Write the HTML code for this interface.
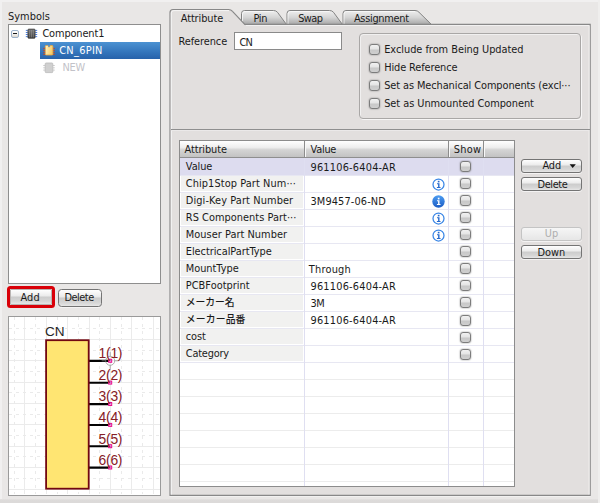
<!DOCTYPE html>
<html lang="en">
<head>
<meta charset="utf-8">
<title>Symbols</title>
<style>
html,body{margin:0;padding:0;}
body{width:600px;height:503px;overflow:hidden;position:relative;background:#e9e7e6;
 font-family:'DejaVu Sans','Liberation Sans','Noto Sans CJK JP',sans-serif;font-size:9.8px;color:#1a1a1a;}
.a{position:absolute;}
.box{position:absolute;background:#fff;border:1px solid #8e8e8e;box-sizing:border-box;}
.btn{position:absolute;box-sizing:border-box;border:1px solid #747474;border-radius:3px;
 background:linear-gradient(#fefefe 0%,#ececec 40%,#cdcdcd 52%,#d6d6d6 80%,#e6e6e6 100%);box-shadow:0 1px 0 #f4f3f3;}
.btn.dis{border-color:#c4c4c4;background:linear-gradient(#f6f6f6,#e6e6e6);}
.cb{position:absolute;width:11px;height:11px;box-sizing:border-box;border:1px solid #7c7c7c;border-radius:3px;
 background:linear-gradient(#f1f1f1 0%,#e4e4e4 46%,#c8c8c8 54%,#cfcfcf 100%);box-shadow:0 0 1.5px 0 #6e6e6e;}
.hl{position:absolute;left:180px;width:334px;height:1px;}
#tx{position:absolute;left:0;top:0;}
#tx text{font-family:'DejaVu Sans','Liberation Sans','Noto Sans CJK JP',sans-serif;font-size:9.8px;}
</style>
</head>
<body>
<!-- window edges -->
<div class="a" style="left:0;top:0;width:600px;height:2px;background:#f1f0f0"></div>
<div class="a" style="left:0;top:0;width:2px;height:503px;background:#f1f0f0"></div>
<div class="a" style="left:0;top:499px;width:600px;height:4px;background:linear-gradient(#e4e2e1,#dcdad9 40%)"></div>

<!-- LEFT PANEL -->
<div class="box" style="left:8px;top:24px;width:153px;height:260px;"></div>
<div class="a" style="left:40px;top:42px;width:120px;height:17px;background:linear-gradient(#4c92d2,#3577bd 55%,#2762aa);"></div>
<!-- expander -->
<div class="a" style="left:11px;top:29.5px;width:8px;height:8px;box-sizing:border-box;border:1px solid #9db2ca;border-radius:2px;background:linear-gradient(#ffffff,#f4f2ee 50%,#dcd8d0);"></div>
<div class="a" style="left:13px;top:33px;width:4px;height:1.3px;background:#1a1a1a;"></div>
<!-- icons -->
<svg class="a" style="left:25px;top:28px" width="13" height="12" viewBox="0 0 13 12">
 <defs><linearGradient id="cg" x1="0" y1="0" x2="0" y2="1"><stop offset="0" stop-color="#7a7a7a"/><stop offset="1" stop-color="#3c3c3c"/></linearGradient></defs>
 <g fill="#4a7ee0"><rect x="0.8" y="1.9" width="2" height="1"/><rect x="0.8" y="4" width="2" height="1"/><rect x="0.8" y="6" width="2" height="1"/><rect x="0.8" y="8.1" width="2" height="1"/>
 <rect x="10.2" y="1.9" width="2" height="1"/><rect x="10.2" y="4" width="2" height="1"/><rect x="10.2" y="6" width="2" height="1"/><rect x="10.2" y="8.1" width="2" height="1"/></g>
 <rect x="2.9" y="1.1" width="7.2" height="9.2" rx="0.9" fill="url(#cg)" stroke="#3a3a3a" stroke-width="0.7"/>
 <path d="M4.700 2v7.400M6.500 2v7.400M8.300 2v7.400" stroke="#9a9a9a" stroke-width="0.7" opacity="0.8"/>
</svg>
<svg class="a" style="left:42px;top:45px" width="14" height="11" viewBox="0 0 14 11">
 <defs><linearGradient id="yg" x1="0" y1="0" x2="1" y2="0.3"><stop offset="0" stop-color="#fff4c4"/><stop offset="1" stop-color="#f6cc68"/></linearGradient></defs>
 <g fill="#b8482e"><rect x="1.200" y="2.900" width="2" height="1"/><rect x="1.200" y="4.900" width="2" height="1"/><rect x="1.200" y="6.900" width="2" height="1"/><rect x="1.200" y="8.900" width="2" height="1"/>
 <rect x="10.800" y="2.900" width="2" height="1"/><rect x="10.800" y="4.900" width="2" height="1"/><rect x="10.800" y="6.900" width="2" height="1"/><rect x="10.800" y="8.900" width="2" height="1"/></g>
 <rect x="3.300" y="0.500" width="7.600" height="9.500" rx="0.800" fill="url(#yg)" stroke="#e6a540" stroke-width="0.800"/>
 <path d="M6 0.200h2.100v1.700h-2.100z" fill="#4c8fd0"/><path d="M6 1.900h2.100" stroke="#e6a540" stroke-width="0.600"/>
</svg>
<svg class="a" style="left:42px;top:62px" width="14" height="12" viewBox="0 0 14 12">
 <g fill="#cfcfcf"><rect x="1.200" y="3" width="2" height="1"/><rect x="1.200" y="5.300" width="2" height="1"/><rect x="1.200" y="7.600" width="2" height="1"/>
 <rect x="10.800" y="3" width="2" height="1"/><rect x="10.800" y="5.300" width="2" height="1"/><rect x="10.800" y="7.600" width="2" height="1"/></g>
 <rect x="3.200" y="1" width="7.600" height="9.600" rx="0.900" fill="#d0d0d0" stroke="#b9b9b9" stroke-width="0.800"/>
</svg>

<!-- Add / Delete -->
<div class="a" style="left:7px;top:286px;width:48px;height:22px;box-sizing:border-box;border:3px solid #d90008;border-radius:3.5px;"></div>
<div class="btn" style="left:10px;top:289px;width:42px;height:16px;border-radius:1px;border-color:#b9b4b2;box-shadow:none;"></div>
<div class="btn" style="left:58px;top:289px;width:44px;height:18px;border-radius:3.5px;"></div>

<!-- preview -->
<div class="box" style="left:8px;top:316px;width:153px;height:180px;border-color:#9a9a9a;"></div>
<svg class="a" style="left:9px;top:317px" width="151" height="177" viewBox="9 317 151 177">
 <g stroke="#ebebeb" stroke-width="1">
  <path d="M24.500 317v177M46.500 317v177M67.500 317v177M89.500 317v177M110.500 317v177M131.500 317v177M153.500 317v177"/>
  <path d="M9 339.500h151M9 360.500h151M9 382.500h151M9 403.500h151M9 424.500h151M9 446.500h151M9 467.500h151M9 489.500h151"/>
 </g>
 <g stroke="#eaeaea" stroke-width="1" stroke-dasharray="3 4">
  <path d="M14.500 317v177M35.500 317v177M57.500 317v177M78.500 317v177M99.500 317v177M121.500 317v177M142.500 317v177"/>
  <path d="M9 328.500h151M9 350.500h151M9 371.500h151M9 392.500h151M9 414.500h151M9 435.500h151M9 456.500h151M9 478.500h151"/>
 </g>
 <g stroke="#030303" stroke-width="2.100">
  <path d="M89 360.9h21M89 382.7h21M89 404.1h21M89 425.0h21M89 446.3h21M89 467.6h21"/>
 </g>
 <rect x="46.100" y="340.200" width="42.600" height="148.500" fill="#ffe572" stroke="#720810" stroke-width="1.800"/>
 <g fill="none" stroke="#8c8c8c" stroke-width="0.700"><circle cx="110.200" cy="360.800" r="4.500"/><path d="M110.200 352.100v4.200M110.200 365.300v3.600M114.700 360.800h4M101.700 360.800h4" /></g>
 <g fill="#ff9ad6" stroke="#e6108e" stroke-width="1">
  <rect x="108.700" y="359.3" width="3" height="3"/><rect x="108.700" y="381.1" width="3" height="3"/><rect x="108.700" y="402.5" width="3" height="3"/><rect x="108.700" y="423.4" width="3" height="3"/><rect x="108.700" y="444.7" width="3" height="3"/><rect x="108.700" y="466.0" width="3" height="3"/>
 </g>
 <g font-family="'Liberation Sans',sans-serif" font-size="13.900" fill="#862026">
  <text x="98.500" y="358.1" textLength="24">1(1)</text><text x="98.500" y="379.9" textLength="24">2(2)</text><text x="98.500" y="401.3" textLength="24">3(3)</text><text x="98.500" y="422.2" textLength="24">4(4)</text><text x="98.500" y="443.5" textLength="24">5(5)</text><text x="98.500" y="464.8" textLength="24">6(6)</text>
 </g>
 <text x="44.900" y="336" font-family="'Liberation Sans',sans-serif" font-size="13.600" fill="#262626">CN</text>
</svg>

<!-- RIGHT: TAB PANEL -->
<div class="a" style="left:598px;top:0;width:2px;height:503px;background:#efeeed"></div>
<svg class="a" style="left:160px;top:0px" width="440" height="503" viewBox="160 0 440 503">
 <defs>
  <linearGradient id="tg" x1="0" y1="0" x2="0" y2="1"><stop offset="0" stop-color="#f0f0f0"/><stop offset="0.5" stop-color="#d4d4d4"/><stop offset="1" stop-color="#a6a6a6"/></linearGradient>
 </defs>
 <path d="M343 24.5V13.5Q343 10.5 346 10.5H415.0Q417.5 10.5 419.0 12.3L431.5 24.5z" fill="url(#tg)" stroke="#828282" stroke-width="1"/>
 <path d="M344 24V14Q344 11.500 346.5 11.500H415.0" fill="none" stroke="#fafafa" stroke-width="1" opacity="0.8"/>
 <path d="M287 24.5V13.5Q287 10.5 290 10.5H329.5Q332 10.5 333.5 12.3L342.5 24.5z" fill="url(#tg)" stroke="#828282" stroke-width="1"/>
 <path d="M288 24V14Q288 11.500 290.5 11.500H329.5" fill="none" stroke="#fafafa" stroke-width="1" opacity="0.8"/>
 <path d="M241.5 24.5V13.5Q241.5 10.5 244.5 10.5H273.5Q276 10.5 277.5 12.3L286.5 24.5z" fill="url(#tg)" stroke="#828282" stroke-width="1"/>
 <path d="M242.5 24V14Q242.5 11.500 245.0 11.500H273.5" fill="none" stroke="#fafafa" stroke-width="1" opacity="0.8"/>
 <path d="M170 495.300V12.5Q170 9.500 173 9.500H228.5Q231 9.500 232.500 11.300L244.800 24.400H590.200V495.300z" fill="#e2dfde" stroke="#888888" stroke-width="1.150"/>
 <path d="M171.300 494.500V13Q171.300 10.600 174 10.600H229" fill="none" stroke="#f6f5f5" stroke-width="1"/>
 <path d="M246 25.500H589M589.100 25.500V494.500" fill="none" stroke="#f2f1f1" stroke-width="1"/>
 <path d="M169.500 496.500H590.500" fill="none" stroke="#f2f1f0" stroke-width="1"/>
</svg>

<div class="box" style="left:234px;top:32px;width:108px;height:18px;border-color:#8a8a8a;"></div>

<!-- options group -->
<div class="a" style="left:359px;top:33px;width:222px;height:86px;box-sizing:border-box;border:1px solid #a9a7a6;border-radius:4px;box-shadow:1px 1px 0 #f7f6f6, inset 1px 1px 0 #f1f0f0;"></div>
<div class="cb" style="left:369px;top:44px;"></div>
<div class="cb" style="left:369px;top:62px;"></div>
<div class="cb" style="left:369px;top:80px;"></div>
<div class="cb" style="left:369px;top:98px;"></div>

<!-- separator -->
<div class="a" style="left:171px;top:129px;width:419px;height:1px;background:#8f8f8f"></div>
<div class="a" style="left:171px;top:130px;width:418px;height:1px;background:#ebe9e9"></div>

<!-- TABLE -->
<div class="box" style="left:179px;top:140px;width:336px;height:347px;border-color:#8c8c8c;"></div>
<div class="a" style="left:180px;top:141px;width:334px;height:17px;background:linear-gradient(#ffffff,#eeeeee 40%,#d4d4d4 55%,#c2c2c2);border-bottom:1px solid #8e8e8e;box-sizing:border-box;"></div>
<div class="a" style="left:180px;top:158px;width:334px;height:17px;background:#dddcef;"></div>
<div class="a" style="left:181px;top:176px;width:122px;height:15px;background:#f1f1f0;"></div>
<div class="a" style="left:181px;top:193px;width:122px;height:15px;background:#f1f1f0;"></div>
<div class="a" style="left:181px;top:210px;width:122px;height:15px;background:#f1f1f0;"></div>
<div class="a" style="left:181px;top:227px;width:122px;height:15px;background:#f1f1f0;"></div>
<div class="a" style="left:181px;top:244px;width:122px;height:15px;background:#f1f1f0;"></div>
<div class="a" style="left:181px;top:261px;width:122px;height:15px;background:#f1f1f0;"></div>
<div class="a" style="left:181px;top:278px;width:122px;height:15px;background:#f1f1f0;"></div>
<div class="a" style="left:181px;top:295px;width:122px;height:15px;background:#f1f1f0;"></div>
<div class="a" style="left:181px;top:312px;width:122px;height:15px;background:#f1f1f0;"></div>
<div class="a" style="left:181px;top:329px;width:122px;height:15px;background:#f1f1f0;"></div>
<div class="a" style="left:181px;top:346px;width:122px;height:15px;background:#f1f1f0;"></div>
<div class="hl" style="top:175px;background:#e7e7f2"></div>
<div class="hl" style="top:192px;background:#e7e7f2"></div>
<div class="hl" style="top:209px;background:#e7e7f2"></div>
<div class="hl" style="top:226px;background:#e7e7f2"></div>
<div class="hl" style="top:243px;background:#e7e7f2"></div>
<div class="hl" style="top:260px;background:#e7e7f2"></div>
<div class="hl" style="top:277px;background:#e7e7f2"></div>
<div class="hl" style="top:294px;background:#e7e7f2"></div>
<div class="hl" style="top:311px;background:#e7e7f2"></div>
<div class="hl" style="top:328px;background:#e7e7f2"></div>
<div class="hl" style="top:345px;background:#e7e7f2"></div>
<div class="hl" style="top:362px;background:#e7e7f2"></div>
<div class="hl" style="top:379px;background:#ececec"></div>
<div class="hl" style="top:396px;background:#ececec"></div>
<div class="hl" style="top:413px;background:#ececec"></div>
<div class="hl" style="top:430px;background:#ececec"></div>
<div class="hl" style="top:447px;background:#ececec"></div>
<div class="hl" style="top:464px;background:#ececec"></div>
<div class="hl" style="top:481px;background:#ececec"></div>
<!-- column lines -->
<div class="a" style="left:304px;top:158px;width:1px;height:328px;background:#dfdff1"></div>
<div class="a" style="left:448px;top:158px;width:1px;height:328px;background:#dfdff1"></div>
<div class="a" style="left:483px;top:158px;width:1px;height:328px;background:#dfdff1"></div>
<div class="a" style="left:304px;top:141px;width:1px;height:17px;background:#8c8c8c"></div>
<div class="a" style="left:305px;top:141px;width:1px;height:16px;background:#f8f8f8"></div>
<div class="a" style="left:448px;top:141px;width:1px;height:17px;background:#8c8c8c"></div>
<div class="a" style="left:449px;top:141px;width:1px;height:16px;background:#f8f8f8"></div>
<div class="a" style="left:483px;top:141px;width:1px;height:17px;background:#8c8c8c"></div>
<div class="a" style="left:484px;top:141px;width:1px;height:16px;background:#f8f8f8"></div>

<div class="cb" style="left:460px;top:161px;"></div>
<div class="cb" style="left:460px;top:178px;"></div>
<div class="cb" style="left:460px;top:195px;"></div>
<div class="cb" style="left:460px;top:212px;"></div>
<div class="cb" style="left:460px;top:229px;"></div>
<div class="cb" style="left:460px;top:246px;"></div>
<div class="cb" style="left:460px;top:263px;"></div>
<div class="cb" style="left:460px;top:280px;"></div>
<div class="cb" style="left:460px;top:297px;"></div>
<div class="cb" style="left:460px;top:315px;"></div>
<div class="cb" style="left:460px;top:332px;"></div>
<div class="cb" style="left:460px;top:349px;"></div>
<svg class="a" style="left:432px;top:178px" width="13" height="13" viewBox="0 0 13 13"><circle cx="6.5" cy="6.5" r="5.5" fill="#fff" stroke="#3a86e6" stroke-width="1.25"/><path d="M5 5.2h2.500v3.700h1v1h-3.600v-1h1.200v-2.700h-1.100z" fill="#2468cc"/><rect x="5.800" y="2.800" width="1.700" height="1.600" fill="#2468cc"/></svg>
<svg class="a" style="left:432px;top:195px" width="13" height="13" viewBox="0 0 13 13"><defs><linearGradient id="ig" x1="0" y1="0" x2="0" y2="1"><stop offset="0" stop-color="#4c9cf2"/><stop offset="1" stop-color="#1c5cc4"/></linearGradient></defs><circle cx="6.5" cy="6.5" r="6.2" fill="url(#ig)"/><path d="M5 5.200h2.500v3.700h1v1h-3.600v-1h1.200v-2.700h-1.100z" fill="#fff"/><rect x="5.800" y="2.700" width="1.700" height="1.700" fill="#fff"/></svg>
<svg class="a" style="left:432px;top:212px" width="13" height="13" viewBox="0 0 13 13"><circle cx="6.5" cy="6.5" r="5.5" fill="#fff" stroke="#3a86e6" stroke-width="1.25"/><path d="M5 5.2h2.500v3.700h1v1h-3.600v-1h1.200v-2.700h-1.100z" fill="#2468cc"/><rect x="5.800" y="2.800" width="1.700" height="1.600" fill="#2468cc"/></svg>
<svg class="a" style="left:432px;top:229px" width="13" height="13" viewBox="0 0 13 13"><circle cx="6.5" cy="6.5" r="5.5" fill="#fff" stroke="#3a86e6" stroke-width="1.25"/><path d="M5 5.2h2.500v3.700h1v1h-3.600v-1h1.200v-2.700h-1.100z" fill="#2468cc"/><rect x="5.800" y="2.800" width="1.700" height="1.600" fill="#2468cc"/></svg>

<!-- right buttons -->
<div class="btn" style="left:521px;top:159px;width:61px;height:14px;"></div>
<svg class="a" style="left:568px;top:163px" width="10" height="6" viewBox="0 0 10 6"><path d="M1.600 1.200h6.200l-3.100 3.800z" fill="#111"/></svg>
<div class="btn" style="left:521px;top:177px;width:61px;height:14px;"></div>
<div class="btn dis" style="left:521px;top:227px;width:61px;height:14px;"></div>
<div class="btn" style="left:521px;top:245px;width:61px;height:14px;"></div>

<!-- all UI labels -->
<svg id="tx" width="600" height="503" viewBox="0 0 600 503">
<text x="7.9" y="19.6" fill="#1a1a1a" textLength="42.0">Symbols</text>
<text x="42.4" y="36.7" fill="#1a1a1a" textLength="62.0">Component1</text>
<text x="59.2" y="53.5" fill="#ffffff" textLength="43.2">CN_6PIN</text>
<text x="62.4" y="71.0" fill="#c2c2c8" textLength="22.8">NEW</text>
<text x="20.5" y="300.5" fill="#1a1a1a" textLength="19.1">Add</text>
<text x="64.4" y="300.5" fill="#1a1a1a" textLength="29.8">Delete</text>
<text x="180.7" y="21.5" fill="#1a1a1a" textLength="42.5">Attribute</text>
<text x="253.4" y="22.0" fill="#1a1a1a" textLength="14.0">Pin</text>
<text x="298.2" y="22.0" fill="#1a1a1a" textLength="24.7">Swap</text>
<text x="353.9" y="22.0" fill="#1a1a1a" textLength="55.2">Assignment</text>
<text x="178.5" y="44.8" fill="#1a1a1a" textLength="48.7">Reference</text>
<text x="239.5" y="45.5" fill="#1a1a1a" textLength="13.4">CN</text>
<text x="384.2" y="52.9" fill="#1a1a1a" textLength="139.3">Exclude from Being Updated</text>
<text x="384.2" y="70.8" fill="#1a1a1a" textLength="73.3">Hide Reference</text>
<text x="384.2" y="88.8" fill="#1a1a1a" textLength="186.3">Set as Mechanical Components (excl···</text>
<text x="384.2" y="106.7" fill="#1a1a1a" textLength="149.7">Set as Unmounted Component</text>
<text x="184.5" y="153.4" fill="#1a1a1a" textLength="42.5">Attribute</text>
<text x="310.5" y="153.3" fill="#1a1a1a" textLength="25.9">Value</text>
<text x="453.7" y="153.4" fill="#1a1a1a" textLength="27.3">Show</text>
<text x="542.4" y="169.1" fill="#1a1a1a" textLength="18.8">Add</text>
<text x="537.6" y="187.5" fill="#1a1a1a" textLength="30.1">Delete</text>
<text x="544.7" y="237.1" fill="#aeaeae" textLength="13.4">Up</text>
<text x="537.6" y="255.5" fill="#1a1a1a" textLength="27.7">Down</text>
<text x="185.8" y="169.5" fill="#1a1a1a" textLength="26.5">Value</text>
<text x="185.8" y="186.5" fill="#1a1a1a" textLength="110.1">Chip1Stop Part Num···</text>
<text x="185.8" y="203.5" fill="#1a1a1a" textLength="107.3">Digi-Key Part Number</text>
<text x="185.8" y="220.5" fill="#1a1a1a" textLength="110.5">RS Components Part···</text>
<text x="185.8" y="237.5" fill="#1a1a1a" textLength="101.2">Mouser Part Number</text>
<text x="185.8" y="254.5" fill="#1a1a1a" textLength="86.0">ElectricalPartType</text>
<text x="185.8" y="271.5" fill="#1a1a1a" textLength="53.0">MountType</text>
<text x="185.8" y="288.5" fill="#1a1a1a" textLength="63.9">PCBFootprint</text>
<text x="185.8" y="306.1" fill="#1a1a1a" textLength="48.7" font-weight="500">メーカー名</text>
<text x="185.8" y="323.1" fill="#1a1a1a" textLength="59.6" font-weight="500">メーカー品番</text>
<text x="185.8" y="339.5" fill="#1a1a1a" textLength="20.1">cost</text>
<text x="185.8" y="356.5" fill="#1a1a1a" textLength="43.3">Category</text>
<text x="310.5" y="170.6" fill="#1a1a1a" textLength="85.3">961106-6404-AR</text>
<text x="310.5" y="204.6" fill="#1a1a1a" textLength="75.3">3M9457-06-ND</text>
<text x="308.8" y="272.6" fill="#1a1a1a" textLength="41.9">Through</text>
<text x="310.5" y="289.6" fill="#1a1a1a" textLength="85.3">961106-6404-AR</text>
<text x="310.5" y="306.6" fill="#1a1a1a" textLength="14.2">3M</text>
<text x="310.5" y="323.6" fill="#1a1a1a" textLength="85.3">961106-6404-AR</text>
</svg>
</body>
</html>
